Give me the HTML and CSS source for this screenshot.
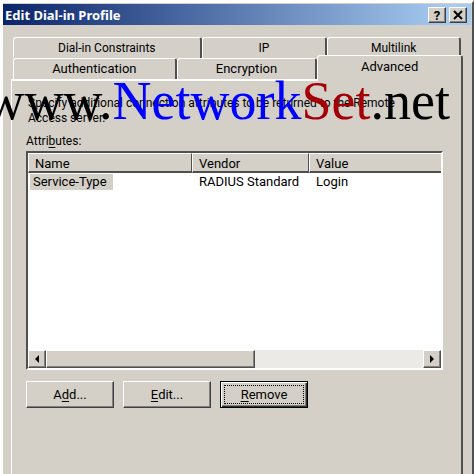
FILE: index.html
```html
<!DOCTYPE html>
<html lang="en">
<head>
<meta charset="utf-8">
<title>Edit Dial-in Profile</title>
<link rel="stylesheet" href="styles.css">
</head>
<body>
<main class="window">
  <header class="titlebar">
    <h1>Edit Dial-in Profile</h1>
    <button class="caption-button" aria-label="Help">?</button>
    <button class="caption-button" aria-label="Close"><svg width="10" height="10" viewBox="0 0 10 10"><path d="M1 1l8 8M9 1L1 9" stroke="#000" stroke-width="2"/></svg></button>
  </header>
  <div class="client">
    <nav class="tabs" role="tablist">
      <div class="tab-row tab-row-back">
        <button class="tab" role="tab">Dial-in Constraints</button>
        <button class="tab" role="tab">IP</button>
        <button class="tab" role="tab">Multilink</button>
      </div>
      <div class="tab-row tab-row-front">
        <button class="tab" role="tab">Authentication</button>
        <button class="tab" role="tab">Encryption</button>
        <button class="tab tab-active" role="tab" aria-selected="true">Advanced</button>
      </div>
    </nav>
    <section class="panel">
      <p class="intro">Specify additional connection attributes to be returned to the Remote<br>Access server.</p>
      <p class="list-label" id="attributes">Attri<u>b</u>utes:</p>
      <div class="list">
        <table aria-labelledby="attributes">
          <colgroup><col class="col-name"><col class="col-vendor"><col></colgroup>
          <thead><tr><th>Name</th><th>Vendor</th><th>Value</th></tr></thead>
          <tbody><tr><td><span class="selected">Service-Type</span></td><td>RADIUS Standard</td><td>Login</td></tr></tbody>
        </table>
        <div class="scrollbar">
          <button class="arrow" aria-label="Scroll left"><svg width="6" height="10" viewBox="0 0 6 10"><path d="M5 1v8L1 5z"/></svg></button>
          <div class="thumb"></div>
          <div class="track"></div>
          <button class="arrow" aria-label="Scroll right"><svg width="6" height="10" viewBox="0 0 6 10"><path d="M1 1v8l4-4z"/></svg></button>
        </div>
      </div>
      <div class="actions">
        <button class="button">A<u>d</u>d...</button>
        <button class="button"><u>E</u>dit...</button>
        <button class="button button-default"><u>R</u>emove</button>
      </div>
    </section>
  </div>
</main>
<div class="watermark">www.<span class="blue">Network</span><span class="red">Set</span>.net</div>
</body>
</html>
```
FILE: styles.css
```css
* { box-sizing: border-box; }

body {
  position: relative;
  overflow-x: hidden;
  margin: 0;
  background: #d4d0c8;
  color: #000;
  font: 13px/16px Roboto, "Liberation Sans", Arial, sans-serif;
}

button {
  padding: 0;
  border: 0;
  color: inherit;
  background: #d4d0c8;
  font: inherit;
}

h1, p { margin: 0; }

u { text-underline-offset: 2px; }

.window {
  display: flex;
  flex-direction: column;
  min-height: 100vh;
  padding: 1px 1px 0 0;
  border: solid #fff;
  border-width: 3px 0 0 3px;
  border-right: 2px solid #505050;
}

.titlebar {
  display: flex;
  align-items: center;
  gap: 3px;
  height: 21px;
  padding: 0 4px 0 2px;
  background: linear-gradient(90deg, #0a246a, #a6caf0 95%);
}

.titlebar h1 {
  flex: 1;
  color: #fff;
  font: bold 13px/20px "Noto Sans", Tahoma, sans-serif;
}

.caption-button {
  display: grid;
  place-items: center;
  width: 18px;
  height: 16px;
  border: 1px solid;
  border-color: #fff #404040 #404040 #fff;
  box-shadow: inset -1px -1px #808080;
  font-weight: bold;
}

.client {
  flex: 1;
  display: flex;
  flex-direction: column;
  padding: 12px 8px 0;
}

.tab-row { display: grid; }

.tab-row-back {
  grid-template-columns: 189fr 126fr 134fr;
  padding: 0 2px;
  font-size: 12px;
}

.tab-row-front {
  grid-template-columns: 164fr 141fr 146fr;
  padding-left: 2px;
}

.tab {
  height: 21px;
  border: solid;
  border-width: 1px 2px 0 1px;
  border-color: #fff #505050 #fff #fff;
  border-radius: 3px 3px 0 0;
}

.tab-active {
  position: relative;
  height: 26px;
  margin: -3px 0 -2px;
  padding-bottom: 4px;
}

.panel {
  flex: 1;
  padding: 15px 18px 16px 14px;
  border: solid;
  border-width: 2px 2px 0 1px;
  border-color: #fff #505050 #fff #fff;
}

.intro {
  padding-left: 2px;
  font-size: 12px;
  line-height: 15px;
  white-space: nowrap;
}

.list-label {
  padding: 7px 0 2px;
  font-size: 12px;
}

.list {
  display: flex;
  flex-direction: column;
  height: 219px;
  border: 2px solid;
  border-color: #505050 #fff #fff #505050;
  background: #fff;
}

table {
  width: 100%;
  table-layout: fixed;
  border-collapse: separate;
  border-spacing: 0;
}

.col-name { width: 164px; }
.col-vendor { width: 117px; }

th {
  height: 20px;
  padding: 2px 6px 0;
  border: solid;
  border-width: 1px 1px 2px 1px;
  border-color: #fff #505050 #505050 #fff;
  background: #d4d0c8;
  font-weight: normal;
  line-height: 15px;
  text-align: left;
}

th:last-child { border-right: 0; }

td {
  height: 17px;
  padding: 0 7px;
  white-space: nowrap;
}

td:first-child { padding-left: 2px; }

.selected {
  display: block;
  width: 83px;
  padding-left: 3px;
  background: #d4d0c8;
}

.scrollbar {
  display: flex;
  height: 18px;
  margin-top: auto;
  background: #eceae6;
}

.arrow, .thumb {
  border: 1px solid;
  border-color: #fff #505050 #505050 #fff;
  box-shadow: inset -1px -1px #808080;
  background: #d4d0c8;
}

.arrow {
  display: grid;
  place-items: center;
  width: 18px;
}

.thumb { flex: 208; }
.track { flex: 169; }

.actions {
  display: flex;
  gap: 9px;
  margin-top: 11px;
}

.button {
  width: 88px;
  height: 27px;
  border: 1px solid;
  border-color: #fff #404040 #404040 #fff;
  box-shadow: inset -1px -1px #808080;
}

.button-default {
  border-color: #000;
  box-shadow: inset 1px 1px #fff, inset -1px -1px #303030, inset -2px -2px #808080;
  outline: 1px dotted #000;
  outline-offset: -5px;
}

.watermark {
  position: absolute;
  top: 69px;
  right: 24px;
  font: 54px/64px "Liberation Serif", "Times New Roman", serif;
  white-space: nowrap;
  pointer-events: none;
}

.blue { color: #00f; }
.red { color: #a40008; }
```
